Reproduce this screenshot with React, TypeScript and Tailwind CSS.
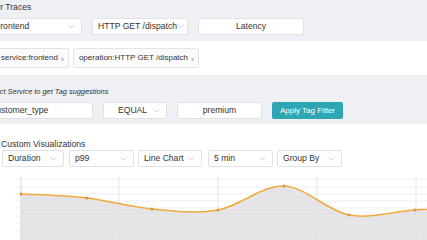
import React from "react";

const font = { fontFamily: '"Liberation Sans", Arial, sans-serif' };

function Chevron() {
  return (
    <svg width="7" height="5" viewBox="0 0 7 5" className="shrink-0">
      <polyline points="0.5,1 3.5,4 6.5,1" fill="none" stroke="#c3c7cc" strokeWidth="0.8" />
    </svg>
  );
}

function Select({ label, className }: { label: string; className: string }) {
  return (
    <div
      className={`flex items-center justify-between whitespace-nowrap rounded-[2px] border border-[#dfe2e6] bg-white pl-[5px] pr-[6px] text-[8.6px] text-[#333] ${className}`}
    >
      <span>{label}</span>
      <Chevron />
    </div>
  );
}

function Field({ label, className }: { label: string; className: string }) {
  return (
    <div
      className={`flex items-center whitespace-nowrap rounded-[2px] border border-[#dfe2e6] bg-white text-[8.6px] text-[#333] ${className}`}
    >
      {label}
    </div>
  );
}

function Tag({ label, className }: { label: string; className: string }) {
  return (
    <div
      className={`flex shrink-0 items-center gap-[3px] whitespace-nowrap rounded-[2px] border border-[#e2e4e8] bg-[#fbfbfc] pl-[5px] pr-[4px] text-[8px] text-[#333] ${className}`}
    >
      <span>{label}</span>
      <span className="mt-[3px] text-[6px] text-[#888]">x</span>
    </div>
  );
}

const pts: [number, number][] = [
  [-45, 191],
  [21, 193],
  [87, 197],
  [152, 208],
  [218, 209],
  [284, 185],
  [349, 214],
  [415, 209],
  [481, 206],
  [547, 206],
];

function curve() {
  let d = `M${pts[1][0]},${pts[1][1]}`;
  for (let i = 1; i < pts.length - 2; i++) {
    const [p0, p1, p2, p3] = [pts[i - 1], pts[i], pts[i + 1], pts[i + 2]];
    const c1x = p1[0] + (p2[0] - p0[0]) / 6;
    const c1y = p1[1] + (p2[1] - p0[1]) / 6;
    const c2x = p2[0] - (p3[0] - p1[0]) / 6;
    const c2y = p2[1] - (p3[1] - p1[1]) / 6;
    d += ` C${c1x},${c1y} ${c2x},${c2y} ${p2[0]},${p2[1]}`;
  }
  return d;
}

function Chart() {
  const line = curve();
  const area = `${line} L481,245 L21,245 Z`;
  const rows = [178, 186, 193, 200, 207, 215, 222, 230, 237];
  const cols = [119, 218, 317, 416];
  return (
    <svg width="427" height="70" viewBox="0 170 427 70" className="block">
      <path d={area} fill="#e4e4e6" />
      {rows.map((y) => (
        <line key={y} x1="16" x2="427" y1={y} y2={y} stroke="#ebebed" strokeWidth="0.8" />
      ))}
      {cols.map((x) => (
        <line key={x} x1={x} x2={x} y1="176" y2="240" stroke="#e0e0e2" strokeWidth="0.8" />
      ))}
      <line x1="21" x2="21" y1="176" y2="240" stroke="#cfcfd2" strokeWidth="0.8" />
      <path d={line} fill="none" stroke="#f0aa3c" strokeWidth="1.5" />
      {pts.slice(1, 8).map(([x, y]) => (
        <circle key={x} cx={x} cy={y} r="1.5" fill="#d8953a" />
      ))}
    </svg>
  );
}

export default function App() {
  return (
    <div className="h-[240px] w-[427px] overflow-hidden bg-white" style={font}>
      <section className="h-[41px] bg-[#eef0f3] pt-[2px]">
        <p className="-ml-[16px] text-[8.6px] leading-[10px] text-[#333]">Filter Traces</p>
        <div className="mt-[6px] flex gap-[10px]">
          <Select label="Frontend" className="-ml-[14px] h-[17px] w-[96px] pl-[8px]" />
          <Select label="HTTP GET /dispatch" className="h-[17px] w-[96px]" />
          <Field label="Latency" className="h-[17px] w-[106px] justify-center" />
        </div>
      </section>

      <section className="h-[34px] bg-white pt-[7px]">
        <div className="flex gap-[4px]">
          <Tag label="service:frontend" className="-ml-[5px] h-[20px]" />
          <Tag label="operation:HTTP GET /dispatch" className="h-[20px]" />
        </div>
      </section>

      <section className="h-[49px] bg-[#eef0f3] pt-[13px]">
        <p className="-ml-[15px] text-[7.4px] italic leading-[8px] text-[#333]">
          Select Service to get Tag suggestions
        </p>
        <div className="mt-[6px] flex items-center gap-[10px]">
          <Field label="customer_type" className="-ml-[17px] h-[17px] w-[110px] pl-[8px]" />
          <div className="flex h-[17px] w-[64px] items-center justify-between rounded-[2px] border border-[#dfe2e6] bg-white pl-[14px] pr-[6px] text-[8.6px] text-[#333]">
            <span>EQUAL</span>
            <Chevron />
          </div>
          <Field label="premium" className="h-[17px] w-[85px] justify-center" />
          <button className="h-[17px] w-[71px] whitespace-nowrap rounded-[2px] bg-[#2fa6b4] text-[8px] text-white">
            Apply Tag Filter
          </button>
        </div>
      </section>

      <section className="bg-white pt-[15px]">
        <p className="pl-[1px] text-[8.6px] leading-[10px] text-[#333]">Custom Visualizations</p>
        <div className="mt-[1px] flex gap-[4px] pl-[2px]">
          <Select label="Duration" className="h-[17px] w-[62px]" />
          <Select label="p99" className="ml-[1px] h-[17px] w-[65px]" />
          <Select label="Line Chart" className="h-[17px] w-[64px]" />
          <Select label="5 min" className="ml-[2px] h-[17px] w-[65px]" />
          <Select label="Group By" className="h-[17px] w-[65px]" />
        </div>
        <div className="mt-[4px]">
          <Chart />
        </div>
      </section>
    </div>
  );
}
